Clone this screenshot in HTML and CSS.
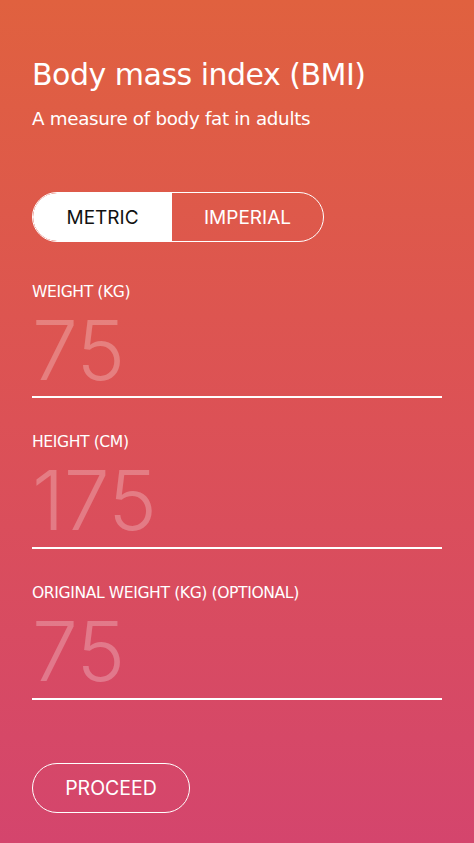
FILE: index.html
```html
<!DOCTYPE html>
<html>
<head>
<meta charset="utf-8">
<link rel="stylesheet" href="styles.css">
</head>
<body>
<div class="page">
  <header class="head">
    <h1 class="title">Body mass index (BMI)</h1>
    <p class="subtitle">A measure of body fat in adults</p>
  </header>
  <div class="toggle">
    <div class="opt active">METRIC</div>
    <div class="opt">IMPERIAL</div>
  </div>
  <div class="fields">
    <div class="field">
      <div class="label">WEIGHT (KG)</div>
      <div class="value">75</div>
    </div>
    <div class="field">
      <div class="label">HEIGHT (CM)</div>
      <div class="value">175</div>
    </div>
    <div class="field">
      <div class="label">ORIGINAL WEIGHT (KG) (OPTIONAL)</div>
      <div class="value">75</div>
    </div>
  </div>
  <button class="proceed">PROCEED</button>
</div>
</body>
</html>
```
FILE: styles.css
```css
html, body {
  margin: 0;
  padding: 0;
}
body {
  width: 474px;
  height: 843px;
  overflow: hidden;
  background: linear-gradient(180deg, #e0613f 0%, #dc5156 50%, #d4456d 100%);
  color: #fff;
  font-family: "DejaVu Sans", sans-serif;
}
.page {
  padding: 56px 32px 0 32px;
  display: flex;
  flex-direction: column;
  align-items: flex-start;
}
.title {
  margin: 0;
  font-weight: normal;
  font-size: 30px;
  line-height: 38px;
  letter-spacing: -0.5px;
}
.subtitle {
  margin: 14px 0 0 0;
  font-size: 18.3px;
  line-height: 22px;
  letter-spacing: -0.3px;
}
.toggle {
  margin-top: 62px;
  width: 292px;
  height: 50px;
  box-sizing: border-box;
  border: 1.5px solid #fff;
  border-radius: 25px;
  display: flex;
  overflow: hidden;
  font-family: "Inter", "Roboto", sans-serif;
  font-size: 19px;
}
.opt {
  flex: 1;
  display: flex;
  align-items: center;
  justify-content: center;
  color: #fff;
}
.opt.active {
  flex: 0 0 139px;
  background: #fff;
  color: #111;
  border-radius: 25px 0 0 25px;
}
.fields {
  margin-top: 42px;
  display: flex;
  flex-direction: column;
}
.field {
  display: block;
  width: 410px;
  border-bottom: 2px solid #fff;
  height: 113px;
  padding-top: 36px;
}
.field:first-child {
  padding-top: 0;
  height: 112px;
}
.label {
  font-size: 15.6px;
  line-height: 16px;
  letter-spacing: -0.4px;
}
.value {
  margin-top: 0;
  font-family: "Inter", sans-serif;
  font-weight: 300;
  font-size: 82px;
  line-height: 102px;
  color: rgba(255, 255, 255, 0.26);
  letter-spacing: -0.5px;
}
.proceed {
  margin-top: 63px;
  width: 158px;
  height: 50px;
  border: 1.5px solid #fff;
  border-radius: 25px;
  background: transparent;
  color: #fff;
  font-family: "Inter", "Roboto", sans-serif;
  font-size: 19.5px;
  padding: 0;
}
```
